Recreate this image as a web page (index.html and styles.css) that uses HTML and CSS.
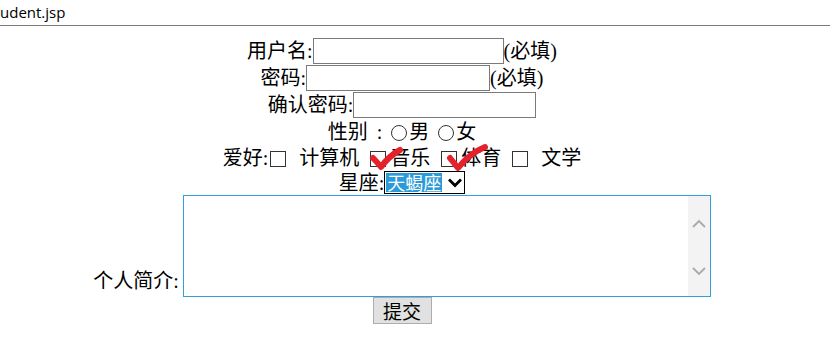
FILE: index.html
```html
<!DOCTYPE html>
<html lang="zh-CN">
<head>
    <meta charset="UTF-8">
    <title>student.jsp</title>
    <link rel="stylesheet" href="styles.css">
</head>
<body>
    <div class="tab">udent.jsp</div>

    <form class="page" action="#">
        <div class="row">用户名:<input type="text" class="field field-user">(必填)</div>
        <div class="row">密码:<input type="password" class="field field-pwd">(必填)</div>
        <div class="row">确认密码:<input type="password" class="field field-pwd2"></div>
        <div class="row">性别 : <input type="radio" name="sex" class="radio">男 <input type="radio" name="sex" class="radio">女</div>
        <div class="row row-hobby">爱好:<input type="checkbox" class="check"> 计算机 <input type="checkbox" class="check">音乐 <input type="checkbox" class="check">体育 <input type="checkbox" class="check"> 文学</div>
        <div class="row row-star">星座:<span class="select"><span class="select-value">天蝎座</span><svg class="select-arrow" width="16" height="11" viewBox="0 0 16 11"><polyline points="2,2.5 8,8.5 14,2.5" fill="none" stroke="#000" stroke-width="2.8"/></svg></span></div>
        <div class="row row-intro">
            <span class="intro-label">个人简介:</span><span class="textbox"><textarea class="textarea"></textarea><span class="scrollbar"><svg width="16" height="10" viewBox="0 0 16 10"><polyline points="2,8 8,2 14,8" fill="none" stroke="#aaa" stroke-width="1.8"/></svg><svg width="16" height="10" viewBox="0 0 16 10"><polyline points="2,2 8,8 14,2" fill="none" stroke="#aaa" stroke-width="1.8"/></svg></span></span>
        </div>
        <div class="row row-submit"><button type="submit" class="submit">提交</button></div>
    </form>

    <!-- красные галочки поверх формы -->
    <svg class="marks" width="830" height="358" viewBox="0 0 830 358">
        <path d="M373 158 Q377 162 381 167 Q389 156 400 150" fill="none" stroke="#e5212b" stroke-width="6" stroke-linecap="round" stroke-linejoin="round"/>
        <path d="M450 158 Q454 163 458 168 Q470 153 485 147" fill="none" stroke="#e5212b" stroke-width="6" stroke-linecap="round" stroke-linejoin="round"/>
    </svg>
</body>
</html>
```

FILE: styles.css
```css
body {
    margin: 0;
    position: relative;
    background: #fff;
    color: #000;
}
.tab {
    height: 25px;
    line-height: 24px;
    border-bottom: 1px solid #7a7a7a;
    font-family: "Open Sans", "Liberation Sans", sans-serif;
    font-size: 15px;
}
.page {
    width: 804px;
    margin: 0;
    padding-top: 12px;
    text-align: center;
    font-family: "Liberation Serif", "Noto Sans CJK SC", serif;
    font-size: 20px;
    word-spacing: 4px;
}
.row {
    height: 27px;
    line-height: 27px;
    white-space: nowrap;
}
.field {
    box-sizing: border-box;
    height: 26px;
    border: 1px solid #7a7a7a;
    padding: 0 2px;
    margin: 0;
    vertical-align: top;
    background: #fff;
}
.field-user { width: 191px; }
.field-pwd { width: 184px; }
.field-pwd2 { width: 183px; }
.radio {
    -webkit-appearance: none;
    appearance: none;
    box-sizing: border-box;
    width: 16px;
    height: 16px;
    border: 1px solid #333;
    border-radius: 50%;
    margin: 0 2px 0 0;
    vertical-align: -2px;
}
.row-hobby {
    height: 25px;
    line-height: 25px;
}
.check {
    -webkit-appearance: none;
    appearance: none;
    box-sizing: border-box;
    width: 16px;
    height: 16px;
    border: 1px solid #333;
    border-radius: 0;
    margin: 0 4px 0 2px;
    vertical-align: -2px;
}
.row-star {
    height: 24px;
    line-height: 24px;
}
.select {
    display: inline-flex;
    align-items: center;
    box-sizing: border-box;
    width: 81px;
    height: 23px;
    border: 1px solid #000;
    padding-left: 1px;
    vertical-align: top;
    line-height: 19px;
    word-spacing: 0;
}
.select-value {
    background: #2a9ad9;
    color: #fff;
    padding: 0 1px;
    font-family: "Noto Sans CJK SC", sans-serif;
    font-size: 18px;
}
.select-arrow {
    margin-left: 5px;
}
.row-intro {
    height: 102px;
    line-height: 26px;
}
.intro-label {
    display: inline-block;
    vertical-align: bottom;
    padding-bottom: 3px;
    padding-right: 4px;
}
.textbox {
    display: inline-flex;
    box-sizing: border-box;
    width: 528px;
    height: 102px;
    border: 1px solid #2e9fe0;
    vertical-align: bottom;
    background: #fff;
}
.textarea {
    flex: 1;
    border: none;
    outline: none;
    resize: none;
    margin: 0;
    padding: 2px;
}
.scrollbar {
    width: 22px;
    background: #f3f3f3;
    display: flex;
    flex-direction: column;
    align-items: center;
    justify-content: space-between;
    padding: 23px 0 20px;
}
.scrollbar svg {
    display: block;
}
.row-submit {
    height: 27px;
}
.submit {
    box-sizing: border-box;
    width: 59px;
    height: 27px;
    margin: 0;
    padding: 0;
    vertical-align: top;
    background: #e1e1e1;
    border: 1px solid #adadad;
    font-family: "Noto Sans CJK SC", sans-serif;
    font-size: 19px;
    line-height: 24px;
    color: #000;
}
.marks {
    position: absolute;
    left: 0;
    top: 0;
    pointer-events: none;
}
```
